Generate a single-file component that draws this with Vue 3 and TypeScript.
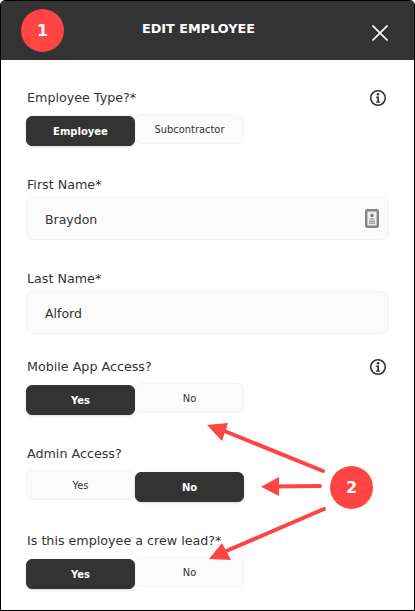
<script setup lang="ts">
interface Toggle { label: string; options: [string, string]; active: number; info?: boolean; cls: string }
const typeToggle: Toggle = { label: 'Employee Type?*', options: ['Employee', 'Subcontractor'], active: 0, info: true, cls: 'f-type' }
const accessToggles: Toggle[] = [
  { label: 'Mobile App Access?', options: ['Yes', 'No'], active: 0, info: true, cls: 'f-mobile' },
  { label: 'Admin Access?', options: ['Yes', 'No'], active: 1, cls: 'f-admin' },
  { label: 'Is this employee a crew lead?*', options: ['Yes', 'No'], active: 0, cls: 'f-crew' },
]
</script>

<template>
  <div class="frame">
    <header class="head">
      <h1 class="title">EDIT EMPLOYEE</h1>
      <svg class="close" width="16" height="16" viewBox="0 0 16 16" fill="none" stroke="#fff" stroke-width="1.6"><path d="M.5 .5 15.5 15.5M15.5 .5 .5 15.5" /></svg>
    </header>
    <main class="body">
      <section class="field f-type">
        <div class="label-row">
          <label>{{ typeToggle.label }}</label>
          <svg class="info" width="18" height="18" viewBox="0 0 18 18"><circle cx="9" cy="9" r="7.3" fill="none" stroke="#333" stroke-width="1.6" /><circle cx="9" cy="5.2" r="1.3" fill="#333" /><path d="M7.2 7.6H10V12.4H11.1V13.7H7.1V12.4H8.2V8.9H7.2Z" fill="#333" /></svg>
        </div>
        <div class="toggle">
          <button v-for="(o, i) in typeToggle.options" :key="o" :class="['opt', { on: i === typeToggle.active }]">{{ o }}</button>
        </div>
      </section>
      <section class="field f-first">
        <div class="label-row"><label>First Name*</label></div>
        <div class="input">
          <span>Braydon</span>
          <svg class="contact" width="14" height="19" viewBox="0 0 14 19"><rect x="1.2" y="1.2" width="11.6" height="16.6" rx="1" fill="#ececec" stroke="#858585" stroke-width="2.4" /><circle cx="7" cy="6.4" r="1.6" fill="#777" /><path d="M4.2 10.6c0-2.2 5.6-2.2 5.6 0ZM4 11.6h6v1.4H4ZM4 13.6h6v1.4H4Z" fill="#a0a0a0" /></svg>
        </div>
      </section>
      <section class="field f-last">
        <div class="label-row"><label>Last Name*</label></div>
        <div class="input"><span>Alford</span></div>
      </section>
      <section v-for="t in accessToggles" :key="t.label" :class="['field', t.cls]">
        <div class="label-row">
          <label>{{ t.label }}</label>
          <svg v-if="t.info" class="info" width="18" height="18" viewBox="0 0 18 18"><circle cx="9" cy="9" r="7.3" fill="none" stroke="#333" stroke-width="1.6" /><circle cx="9" cy="5.2" r="1.3" fill="#333" /><path d="M7.2 7.6H10V12.4H11.1V13.7H7.1V12.4H8.2V8.9H7.2Z" fill="#333" /></svg>
        </div>
        <div class="toggle">
          <button v-for="(o, i) in t.options" :key="o" :class="['opt', { on: i === t.active }]">{{ o }}</button>
        </div>
      </section>
    </main>
    <svg class="arrows" width="415" height="611" viewBox="0 0 415 611" fill="#ff4444" stroke="none">
      <path d="M323 471 222 430" stroke="#ff4444" stroke-width="4" stroke-linecap="round" />
      <path d="M207 425 228 423 222 441Z" />
      <path d="M320 486 272 486.5" stroke="#ff4444" stroke-width="4" stroke-linecap="round" />
      <path d="M261 486.7 279 477 279 496Z" />
      <path d="M324 509 224 552" stroke="#ff4444" stroke-width="4" stroke-linecap="round" />
      <path d="M209 559 222 543 231 560Z" />
    </svg>
    <div class="badge b1">1</div>
    <div class="badge b2">2</div>
  </div>
</template>

<style>
html, body { margin: 0; background: #fff; }
</style>

<style scoped>
.frame {
  position: relative;
  box-sizing: border-box;
  width: 415px;
  height: 611px;
  overflow: hidden;
  border: 1px solid #000;
  border-top-right-radius: 5px;
  border-top-left-radius: 5px;
  background: #fff;
  font-family: "DejaVu Sans", Verdana, sans-serif;
  color: #333;
}
.head {
  box-sizing: border-box;
  height: 59px;
  padding-right: 18px;
  background: #333;
  display: flex;
  align-items: center;
  justify-content: center;
  position: relative;
}
.title {
  margin: 0 0 5px;
  font-size: 12.8px;
  font-weight: 700;
  color: #fff;
}
.close { position: absolute; right: 26px; top: 24px; }
.body { padding: 0 25px; }
.field { display: flex; flex-direction: column; }
.f-type { padding-top: 27px; }
.f-first { padding-top: 28px; }
.f-last { padding-top: 28px; }
.f-mobile { padding-top: 22px; }
.f-admin { padding-top: 28px; }
.f-crew { padding-top: 28px; }
.label-row {
  height: 20px;
  display: flex;
  align-items: center;
  justify-content: space-between;
  padding: 0 2px 0 1px;
  font-size: 12.7px;
}
.info { transform: translateY(1px); }
.toggle {
  margin-top: 7px;
  display: flex;
  align-items: flex-start;
  height: 32px;
}
.opt {
  box-sizing: border-box;
  width: 109px;
  height: 30px;
  border: 1px solid #f4f4f4;
  border-radius: 6px;
  background: #fbfbfb;
  color: #333;
  font: 9.9px "DejaVu Sans", Verdana, sans-serif;
  padding: 0;
}
.opt.on {
  margin-top: 2px;
  background: #333;
  border-color: #333;
  color: #fff;
  font-size: 10px;
  font-weight: 700;
  box-shadow: 0 1px 3px rgba(0, 0, 0, .15);
}
.input {
  box-sizing: border-box;
  margin-top: 3px;
  height: 43px;
  border: 1px solid #f3f3f3;
  border-radius: 7px;
  background: #fbfbfb;
  padding: 0 9px 0 18px;
  display: flex;
  align-items: center;
  justify-content: space-between;
  font-size: 12.5px;
}
.input span { padding-top: 2px; }
.badge {
  position: absolute;
  width: 43px;
  height: 43px;
  border-radius: 50%;
  background: #ff4444;
  color: #fff;
  font: 700 16px/43px "DejaVu Sans", sans-serif;
  text-align: center;
}
.b1 { left: 20px; top: 8px; }
.b2 { left: 329px; top: 465px; }
.arrows { position: absolute; left: -1px; top: -1px; pointer-events: none; }
</style>
